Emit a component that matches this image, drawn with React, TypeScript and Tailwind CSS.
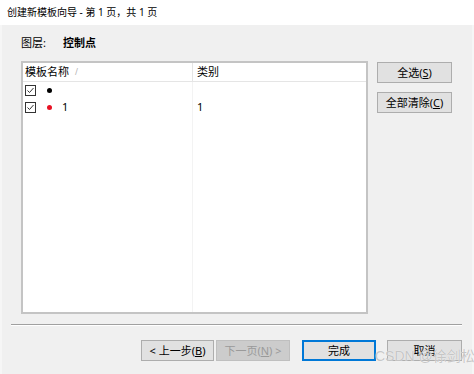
import React from 'react';

const Check = () => (
  <svg width="11" height="11" viewBox="0 0 11 11" className="shrink-0">
    <rect x="0.5" y="0.5" width="10" height="10" fill="#fff" stroke="#333" />
    <path d="M2.5 5.5 L4.5 7.5 L8.5 3" fill="none" stroke="#333" strokeWidth="1" />
  </svg>
);

const Btn = ({ label, accel, pre, post, disabled, primary, w }: any) => (
  <button
    className={`h-[21px] ${w} flex items-center justify-center text-[11px] leading-none whitespace-nowrap ${
      disabled
        ? 'bg-[#cccccc] border border-[#bfbfbf] text-[#9a9a9a]'
        : primary
        ? 'bg-[#e1e1e1] border-2 border-[#0078d7] text-black'
        : 'bg-[#e1e1e1] border border-[#adadad] text-black'
    }`}
  >
    {pre}
    {label}
    {accel && (
      <>
        (<span className="underline">{accel}</span>)
      </>
    )}
    {post}
  </button>
);

export default function App() {
  return (
    <div className="relative w-[474px] h-[374px] flex flex-col bg-white font-['Noto_Sans','Noto_Sans_CJK_SC',sans-serif] text-[11px] text-black overflow-hidden">
      <div className="h-[25px] shrink-0 flex items-center px-[7px] bg-white text-[10px]">
        创建新模板向导 - 第 1 页，共 1 页
      </div>

      <div className="flex-1 flex flex-col bg-[#f0f0f0] border-l-2 border-r-2 border-[#f6f6f6]">
        <div className="flex items-center h-[16px] mt-[10px] pl-[19px] gap-[17px]">
          <span>图层:</span>
          <span className="font-bold">控制点</span>
        </div>

        <div className="flex mt-[10px] pl-[19px]">
          <div className="w-[347px] h-[253px] bg-white border-2 border-[#c4c4c4] flex flex-col">
            <div className="flex h-[19px] border-b border-[#e5e5e5] shrink-0">
              <div className="w-[170px] flex items-center pl-[2px] border-r border-[#e5e5e5]">
                <span>模板名称</span>
                <span className="ml-[6px] text-[8px] text-[#b0b0b0]">/</span>
              </div>
              <div className="flex-1 flex items-center pl-[4px]">类别</div>
            </div>
            <div className="flex flex-1">
              <div className="w-[170px] border-r border-[#f3f3f3] flex flex-col">
                <div className="h-[17px] flex items-center pl-[2px]">
                  <Check />
                  <span className="ml-[11px] w-[5px] h-[5px] rounded-full bg-black" />
                </div>
                <div className="h-[17px] flex items-center pl-[2px]">
                  <Check />
                  <span className="ml-[11px] w-[5px] h-[5px] rounded-full bg-[#e81123]" />
                  <span className="ml-[10px]">1</span>
                </div>
              </div>
              <div className="flex-1 flex flex-col pl-[4px]">
                <div className="h-[17px]" />
                <div className="h-[17px] flex items-center">1</div>
              </div>
            </div>
          </div>

          <div className="flex flex-col gap-[9px] ml-[9px] mt-[1px]">
            <Btn label="全选" accel="S" w="w-[75px]" />
            <Btn label="全部清除" accel="C" w="w-[75px]" />
          </div>
        </div>

        <div className="mt-[10px] ml-[9px] mr-[10px] h-[2px] border-t border-[#a0a0a0] border-b border-b-white" />

        <div className="flex mt-[14px] pl-[139px]">
          <Btn pre="< " label="上一步" accel="B" w="w-[73px]" />
          <Btn label="下一页" accel="N" post=" >" disabled w="w-[74px] ml-[2px]" />
          <Btn label="完成" primary w="w-[74px] ml-[12px]" />
          <Btn label="取消" w="w-[75px] ml-[11px]" />
        </div>
      </div>

      <div className="absolute left-[375px] top-[349px] whitespace-nowrap text-[14px] leading-none text-[#b8b8b8]/80 [text-shadow:0_0_1px_#fff] font-['Liberation_Sans','Noto_Sans_CJK_SC',sans-serif]">
        CSDN @徐剑松
      </div>
    </div>
  );
}
